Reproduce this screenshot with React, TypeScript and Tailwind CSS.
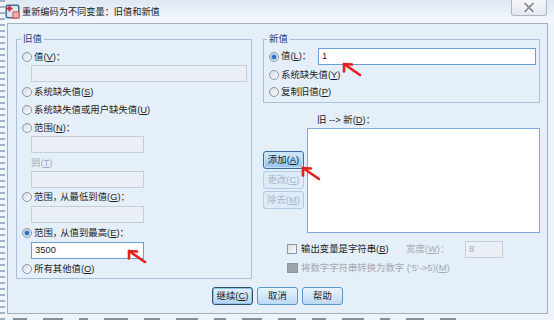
import type { ReactNode } from "react";

const FONT = "font-['Liberation_Sans','Noto_Sans_CJK_SC',sans-serif]";

function Radio({ checked = false, children }: { checked?: boolean; children: ReactNode }) {
  return (
    <div className="flex items-center h-[14px] gap-[2px]">
      <span className="relative grid place-items-center w-[10px] h-[10px] rounded-full border border-[#8d98a6] bg-gradient-to-br from-[#d6dde5] to-[#fbfcfd]">
        {checked ? <span className="w-[4px] h-[4px] rounded-full bg-[#2a6bbd] shadow-[0_0_1px_1px_#7fb2e8]" /> : null}
      </span>
      <span>{children}</span>
    </div>
  );
}

function Box({
  value = "",
  disabled = false,
  className = "",
}: {
  value?: string;
  disabled?: boolean;
  className?: string;
}) {
  return (
    <div
      className={
        "h-[17px] flex items-center px-[3px] border " +
        (disabled
          ? "bg-[#ebf0f6] border-[#c6cdd5] text-[#a3aab2] "
          : "bg-white border-[#6c9ed4] text-[#1e1e1e] ") +
        className
      }
    >
      {value}
    </div>
  );
}

function Btn({
  children,
  kind = "normal",
}: {
  children: ReactNode;
  kind?: "normal" | "default" | "hot" | "disabled";
}) {
  const styles = {
    normal: "border-[#5b95cc] bg-gradient-to-b from-[#eaf4fd] to-[#bcd9f4] text-[#1e1e1e]",
    default:
      "border-[#2d4f73] bg-gradient-to-b from-[#e3f0fc] to-[#b3d3f0] text-[#1e1e1e] shadow-[inset_0_0_0_1px_#93c4ec]",
    hot: "border-[#3b6c9c] bg-gradient-to-b from-[#d3eafb] to-[#93c4ee] text-[#1e1e1e] shadow-[inset_0_0_0_1px_#c4e2f8]",
    disabled: "border-[#b1cce6] bg-[#deebf8] text-[#a7b6c6]",
  }[kind];
  return (
    <div className={"w-[41px] h-[18px] rounded-[3px] border grid place-items-center " + styles}>
      {children}
    </div>
  );
}

function Key({ k }: { k: string }) {
  return (
    <>
      (<u>{k}</u>)
    </>
  );
}

// the comma in the reference is drawn narrow
function Comma() {
  return <span className="tracking-[-2px]">，</span>;
}

function AppIcon() {
  return (
    <svg width="15" height="15" viewBox="0 0 15 15">
      <rect x="0.5" y="0.5" width="14" height="14" rx="2" fill="#3f6f9f" />
      <rect x="2" y="2" width="11" height="11" rx="1" fill="#dfe8f1" />
      <path d="M4.5 1.5v6M1.5 4.5h6" stroke="#d42424" strokeWidth="2" />
      <rect x="8" y="8" width="6" height="6" fill="#ffffff" stroke="#d03030" strokeWidth="1" />
      <path d="M8 10h6M8 12h6M10 8v6M12 8v6" stroke="#e46060" strokeWidth="0.6" />
    </svg>
  );
}

function CloseGlyph() {
  return (
    <svg width="14" height="11" viewBox="0 0 14 11">
      <path d="M3 1.5l8 8M11 1.5l-8 8" stroke="#ffffff" strokeWidth="4" strokeLinecap="round" />
      <path d="M3 1.5l8 8M11 1.5l-8 8" stroke="#8d939b" strokeWidth="2" strokeLinecap="round" />
    </svg>
  );
}

// red annotation arrow, head at top-left
function Arrow({ className }: { className: string }) {
  return (
    <svg width="20" height="15" viewBox="0 0 20 15" className={"absolute " + className}>
      <path d="M2 2L18 13" stroke="#e3201c" strokeWidth="2.6" strokeLinecap="round" />
      <path d="M2 9.5L2 2L10 2.5" fill="none" stroke="#e3201c" strokeWidth="2.6" strokeLinecap="round" strokeLinejoin="round" />
    </svg>
  );
}

const behind = [14, 20, 9, 24, 16, 22, 12, 20, 18, 14, 22, 10, 18, 16];

export default function App() {
  return (
    <div className={"relative w-[554px] h-[320px] overflow-hidden flex bg-[#eef3f9] text-[9.4px] text-[#1e1e1e] " + FONT}>
      {/* strip of the window behind */}
      <div className="w-[5px] shrink-0 h-full bg-[repeating-linear-gradient(180deg,#9fb1c4_0px,#9fb1c4_2px,#f2f5f8_2px,#f2f5f8_6px)]" />

      <div className="flex-1 min-w-0 flex flex-col">
        {/* title bar */}
        <div className="h-[23px] flex items-start bg-gradient-to-b from-[#dfe9f4] to-[#f5f8fc]">
          <div className="mt-[4px]">
            <AppIcon />
          </div>
          <span className="ml-[2px] mt-[5px] text-[9.2px] leading-[14px] text-[#1a1a1a]">
            重新编码为不同变量：旧值和新值
          </span>
          <div className="ml-auto mr-[7px] w-[36px] h-[16px] grid place-items-center border border-t-0 border-[#aeb6c0] rounded-b-[3px] bg-gradient-to-b from-[#f4f6f9] to-[#e4e9ef]">
            <CloseGlyph />
          </div>
        </div>

        {/* client area */}
        <div className="ml-[2px] w-[541px] h-[291px] shrink-0 border border-[#a5b0bd] bg-[#e5eff9] flex flex-col">
          <div className="flex ml-[8px] mt-[15px] gap-[11px]">
            {/* 旧值 */}
            <div className="relative w-[236px] h-[240px] border border-[#a9c0d8] pl-[5px] pt-[10px] flex flex-col">
              <span className="absolute -top-[8px] left-[4px] px-[2px] bg-[#e5eff9] text-[#233f78] leading-[14px]">
                旧值
              </span>
              <Radio>
                值<Key k="V" />：
              </Radio>
              <Box disabled className="ml-[9px] w-[216px] mt-[1px]" />
              <div className="mt-[3px]">
                <Radio>
                  系统缺失值<Key k="S" />
                </Radio>
              </div>
              <div className="mt-[4px]">
                <Radio>
                  系统缺失值或用户缺失值<Key k="U" />
                </Radio>
              </div>
              <div className="mt-[4px]">
                <Radio>
                  范围<Key k="N" />：
                </Radio>
              </div>
              <Box disabled className="ml-[9px] w-[113px] mt-[1px]" />
              <span className="ml-[9px] mt-[3px] h-[14px] leading-[14px] text-[#a3aab2]">
                到<Key k="T" />
              </span>
              <Box disabled className="ml-[9px] w-[113px] mt-[1px]" />
              <div className="mt-[2px]">
                <Radio>
                  范围<Comma />从最低到值<Key k="G" />：
                </Radio>
              </div>
              <Box disabled className="ml-[9px] w-[113px] mt-[2px]" />
              <div className="mt-[3px]">
                <Radio checked>
                  范围<Comma />从值到最高<Key k="E" />：
                </Radio>
              </div>
              <Box value="3500" className="ml-[9px] w-[113px] mt-[2px]" />
              <div className="mt-[3px]">
                <Radio>
                  所有其他值<Key k="O" />
                </Radio>
              </div>
            </div>

            {/* right column */}
            <div className="w-[277px] flex flex-col">
              <div className="relative h-[64px] border border-[#a9c0d8] pl-[5px] pr-[3px] pt-[8px] flex flex-col">
                <span className="absolute -top-[8px] left-[3px] px-[2px] bg-[#e5eff9] text-[#233f78] leading-[14px]">
                  新值
                </span>
                <div className="flex items-center h-[17px]">
                  <Radio checked>
                    值<Key k="L" />：
                  </Radio>
                  <Box value="1" className="ml-auto w-[218px]" />
                </div>
                <div className="mt-[3px]">
                  <Radio>
                    系统缺失值<Key k="Y" />
                  </Radio>
                </div>
                <div className="mt-[3px]">
                  <Radio>
                    复制旧值<Key k="P" />
                  </Radio>
                </div>
              </div>

              <span className="ml-[54px] mt-[10px] h-[14px] leading-[14px]">
                旧 --&gt; 新<Key k="D" />：
              </span>
              <div className="flex mt-[1px] gap-[3px]">
                <div className="flex flex-col gap-[2px] pt-[23px]">
                  <Btn kind="hot">
                    <span>
                      添加<Key k="A" />
                    </span>
                  </Btn>
                  <Btn kind="disabled">
                    <span>
                      更改<Key k="C" />
                    </span>
                  </Btn>
                  <Btn kind="disabled">
                    <span>
                      除去<Key k="M" />
                    </span>
                  </Btn>
                </div>
                <div className="w-[233px] h-[105px] bg-white border border-[#7ea9d9]" />
              </div>

              <div className="flex items-center h-[17px] mt-[8px] ml-[24px]">
                <span className="w-[119px] flex items-center gap-[4px]">
                  <span className="w-[10px] h-[10px] border border-[#8d98a6] bg-gradient-to-br from-[#d9dfe6] to-[#fbfcfd]" />
                  <span>
                    输出变量是字符串<Key k="B" />
                  </span>
                </span>
                <span className="w-[59px] text-[#a3aab2]">
                  宽度<Key k="W" />：
                </span>
                <Box value="8" disabled className="w-[38px]" />
              </div>
              <div className="flex items-center h-[14px] mt-[3px] ml-[24px] gap-[3px] text-[#a3aab2]">
                <span className="w-[11px] h-[10px] border border-[#8f959c] bg-[#9da3a9]" />
                <span>
                  将数字字符串转换为数字 ('5'-&gt;5)<Key k="M" />
                </span>
              </div>
            </div>
          </div>

          <div className="flex justify-center gap-[4px] mt-[8px]">
            <Btn kind="default">
              <span>
                继续<Key k="C" />
              </span>
            </Btn>
            <Btn>取消</Btn>
            <Btn>帮助</Btn>
          </div>
        </div>

        {/* tops of the rows of the window behind */}
        <div className="mt-[3px] h-[3px] overflow-hidden flex gap-[16px] pl-[8px]">
          {behind.map((w, i) => (
            <span key={i} className="h-[2px] mt-[1px] shrink-0 bg-[#8a8f96]" style={{ width: w }} />
          ))}
        </div>
      </div>

      {/* annotation arrows drawn on the screenshot */}
      <Arrow className="left-[342px] top-[62px]" />
      <Arrow className="left-[127px] top-[249px]" />
      <Arrow className="left-[301px] top-[166px]" />
    </div>
  );
}
